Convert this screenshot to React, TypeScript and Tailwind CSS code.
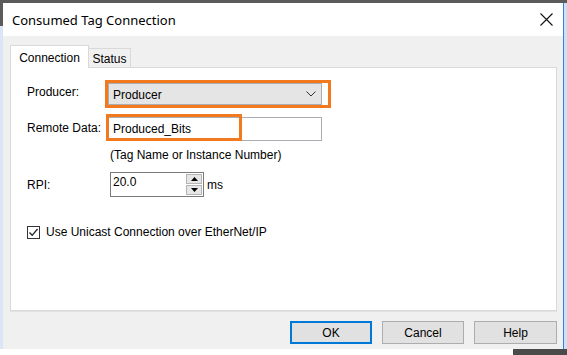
import React from "react";

const ui = { fontFamily: '"Liberation Sans", Arial, sans-serif' };
const titleFont = { fontFamily: '"Noto Sans", "Open Sans", sans-serif' };

function Chevron() {
  return (
    <svg width="10" height="6" viewBox="0 0 10 6" className="block">
      <path d="M0.5 0.5 L5 5 L9.5 0.5" fill="none" stroke="#333" strokeWidth="1" />
    </svg>
  );
}

function Orange({ className }: { className: string }) {
  return <div className={"absolute border-[3px] border-[#f2791d] pointer-events-none " + className} />;
}

export default function App() {
  return (
    <div className="w-[567px] h-[355px] bg-white flex flex-col overflow-hidden text-[12px] text-black" style={ui}>
      <div className="h-[3px] bg-[#5b5b5b] shrink-0" />
      <div className="flex h-[346px] shrink-0">
        <div className="w-[3px] flex flex-col shrink-0">
          <div className="h-[23px] bg-[#5b5b5b]" />
          <div className="flex-1 bg-[#dbe6f4]" />
        </div>
        <div className="flex-1 flex flex-col">
          {/* title bar */}
          <div className="h-[33px] bg-white flex items-center justify-between pl-[9px] pr-[10px]">
            <span className="text-[13px] text-black relative top-[1px]" style={titleFont}>Consumed Tag Connection</span>
            <svg width="13" height="13" viewBox="0 0 13 13">
              <path d="M0.5 0.5 L12.5 12.5 M12.5 0.5 L0.5 12.5" stroke="#111" strokeWidth="1.1" />
            </svg>
          </div>
          {/* body */}
          <div className="flex-1 bg-[#f0f0f0] pl-[7px] pr-[6px] pt-[9px] flex flex-col">
            {/* tabs */}
            <div className="flex items-end h-[22px] relative z-10">
              <div className="w-[79px] bg-white border border-b-0 border-[#d9d9d9] flex items-center justify-center pt-[1px] -mb-[1px] h-[23px]">
                Connection
              </div>
              <div className="w-[42px] h-[19px] bg-[#f0f0f0] border border-l-0 border-b-0 border-[#d9d9d9] flex items-center justify-center pt-[1px]">
                Status
              </div>
            </div>
            {/* panel */}
            <div className="h-[244px] bg-white border border-[#d9d9d9] shadow-[0_1px_0_#e3e3e3] pt-[15px] pl-[16px] flex flex-col">
              {/* producer */}
              <div className="flex items-center h-[22px]">
                <div className="w-[81px] relative -top-[2px]">Producer:</div>
                <div className="relative w-[214px] h-[22px] bg-[#e5e5e5] border border-[#acacac] flex items-center justify-between pl-[4px] pr-[5px]">
                  <span className="relative top-[1px]">Producer</span>
                  <Chevron />
                  <Orange className="-left-[4px] -top-[4px] -right-[10px] -bottom-[4px]" />
                </div>
              </div>
              {/* remote data */}
              <div className="flex items-center h-[24px] mt-[12px]">
                <div className="w-[81px] relative -top-[1px]">Remote Data:</div>
                <div className="relative w-[214px] h-[24px] bg-white border border-[#abadb3] flex items-center pl-[4px]">
                  <span>Produced_Bits</span>
                  <Orange className="-left-[3px] -top-[4px] w-[136px] -bottom-[1px]" />
                </div>
              </div>
              <div className="mt-[7px] pl-[83px] h-[14px] leading-[14px]">(Tag Name or Instance Number)</div>
              {/* rpi */}
              <div className="flex items-center h-[25px] mt-[10px]">
                <div className="w-[83px]">RPI:</div>
                <div className="w-[94px] h-[25px] bg-white border border-[#7a7a7a] flex">
                  <div className="flex-1 pl-[2px] leading-[18px]">20.0</div>
                  <div className="w-[17px] flex flex-col gap-[1px] py-[1px] pr-[1px]">
                    <div className="flex-1 bg-[#e6e6e6] border border-[#b5b5b5] flex items-center justify-center">
                      <svg width="7" height="4" viewBox="0 0 7 4"><path d="M0 4 L3.5 0 L7 4 Z" fill="#000" /></svg>
                    </div>
                    <div className="flex-1 bg-[#e6e6e6] border border-[#b5b5b5] flex items-center justify-center">
                      <svg width="7" height="4" viewBox="0 0 7 4"><path d="M0 0 L3.5 4 L7 0 Z" fill="#000" /></svg>
                    </div>
                  </div>
                </div>
                <div className="ml-[3px]">ms</div>
              </div>
              {/* checkbox */}
              <div className="flex items-center h-[14px] mt-[28px]">
                <div className="w-[13px] h-[13px] border border-[#333] bg-white flex items-center justify-center">
                  <svg width="11" height="11" viewBox="0 0 11 11">
                    <path d="M1.5 5.5 L4.2 8.3 L9.5 2" fill="none" stroke="#222" strokeWidth="1.3" />
                  </svg>
                </div>
                <div className="ml-[6px]">Use Unicast Connection over EtherNet/IP</div>
              </div>
            </div>
            {/* buttons */}
            <div className="flex justify-end gap-[10px] mt-[10px]">
              <div className="w-[82px] h-[23px] bg-[#e1e1e1] border-2 border-[#0078d7] flex items-center justify-center">OK</div>
              <div className="w-[82px] h-[23px] bg-[#e1e1e1] border border-[#adadad] flex items-center justify-center">Cancel</div>
              <div className="w-[83px] h-[23px] bg-[#e1e1e1] border border-[#adadad] flex items-center justify-center">Help</div>
            </div>
          </div>
        </div>
        <div className="w-[4px] flex shrink-0">
          <div className="w-[1px] bg-[#2f83da]" />
          <div className="flex-1 bg-[#cfe0f4]" />
        </div>
      </div>
      <div className="flex-1 flex">
        <div className="flex-1 bg-white" />
        <div className="w-[54px] bg-[#4a4a4a]" />
      </div>
    </div>
  );
}
